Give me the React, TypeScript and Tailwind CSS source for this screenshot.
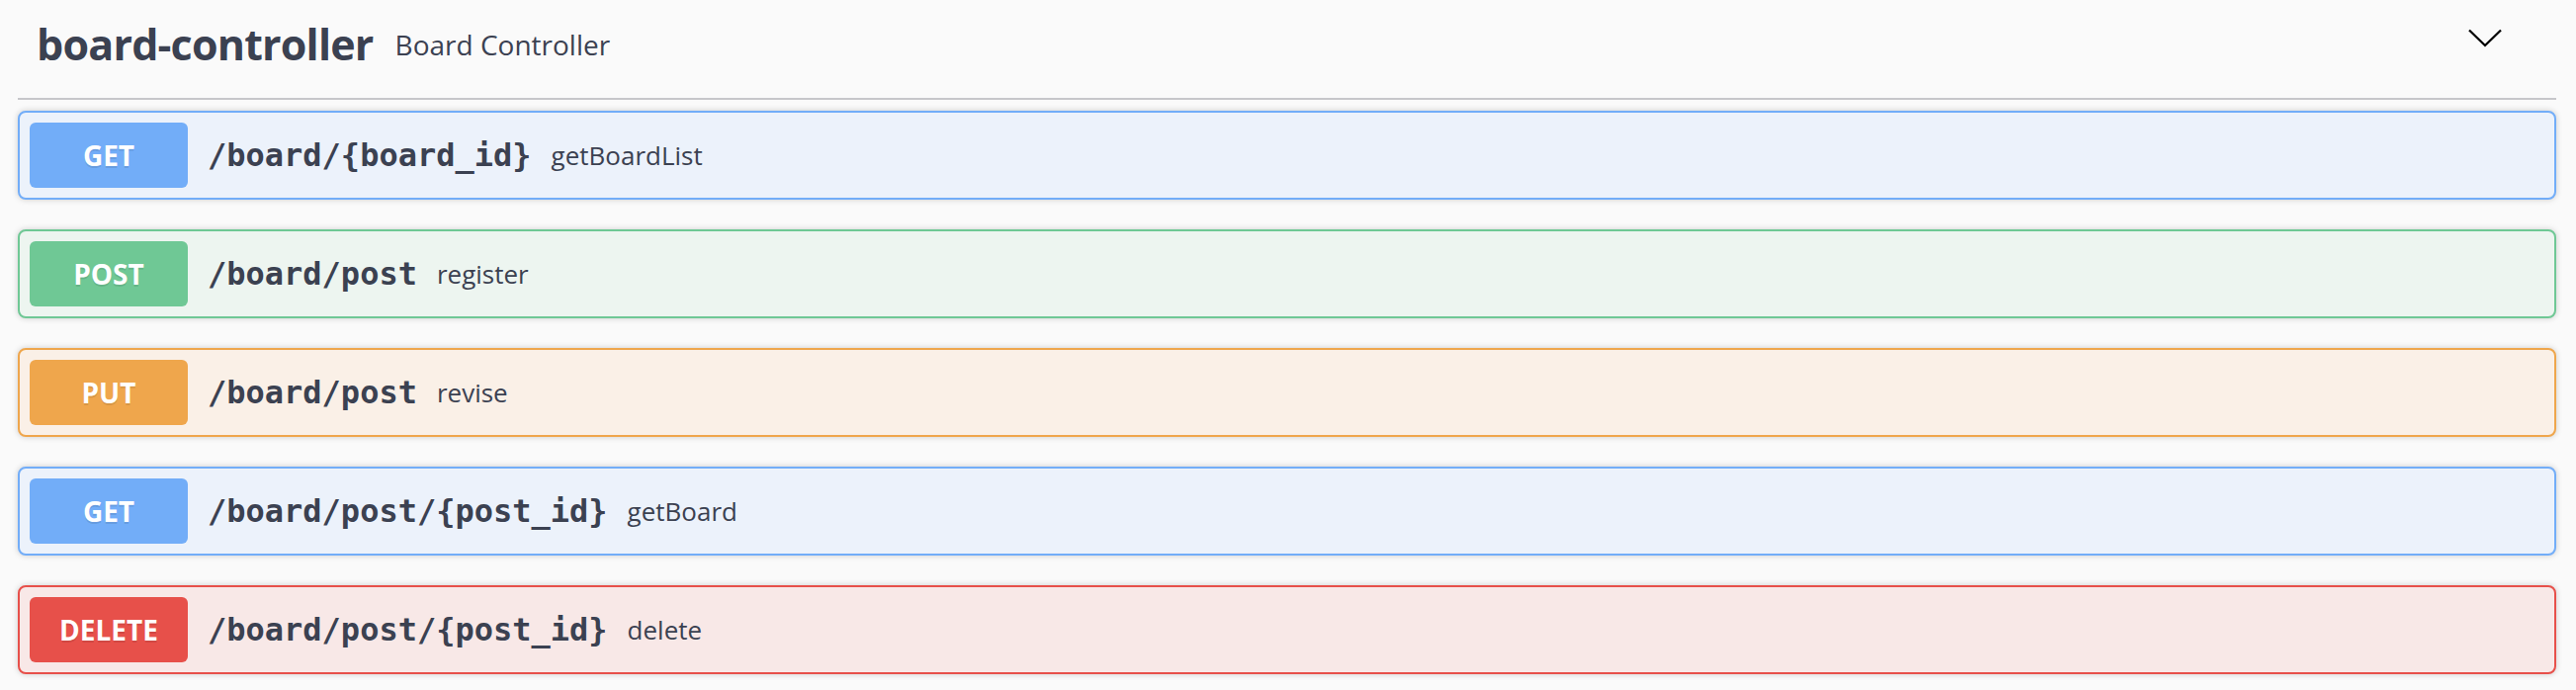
type Method = "GET" | "POST" | "PUT" | "DELETE";

interface Operation {
  method: Method;
  path: string;
  summary: string;
}

const operations: Operation[] = [
  { method: "GET", path: "/board/{board_id}", summary: "getBoardList" },
  { method: "POST", path: "/board/post", summary: "register" },
  { method: "PUT", path: "/board/post", summary: "revise" },
  { method: "GET", path: "/board/post/{post_id}", summary: "getBoard" },
  { method: "DELETE", path: "/board/post/{post_id}", summary: "delete" },
];

const rowStyles: Record<Method, { row: string; badge: string }> = {
  GET: { row: "border-[#72adf8] bg-[#ecf2fb]", badge: "bg-[#72adf8]" },
  POST: { row: "border-[#6fc895] bg-[#edf5f0]", badge: "bg-[#6fc895]" },
  PUT: { row: "border-[#efa64c] bg-[#faf0e7]", badge: "bg-[#efa64c]" },
  DELETE: { row: "border-[#e7504a] bg-[#f8e8e7]", badge: "bg-[#e7504a]" },
};

function OperationRow({ op }: { op: Operation }) {
  const style = rowStyles[op.method];
  return (
    <div
      className={`flex items-center rounded-[8px] border-2 p-[10px] shadow-[0_0_6px_rgba(0,0,0,0.19)] ${style.row}`}
    >
      <span
        className={`flex h-[66px] w-[160px] shrink-0 items-center justify-center rounded-[6px] text-[28px] font-bold text-white [text-shadow:0_2px_0_rgba(0,0,0,0.1)] ${style.badge}`}
      >
        {op.method}
      </span>
      <span className="px-[20px] font-['DejaVu_Sans_Mono',monospace] text-[32px] font-bold">
        {op.path}
      </span>
      <span className="text-[26px]">{op.summary}</span>
    </div>
  );
}

export default function App() {
  return (
    <div className="min-h-screen bg-[#fafafa] pl-[18px] pr-[20px] font-['Open_Sans',sans-serif] text-[#3b4151]">
      {/* Tag header */}
      <div className="flex h-[101px] items-start border-b-2 border-[#c6c6ca] pl-[19px] pt-[16px]">
        <h3 className="text-[43px] font-bold leading-[58px] tracking-[-0.8px]">board-controller</h3>
        <small className="ml-[22px] mt-[10px] text-[28px] leading-[38px]">Board Controller</small>
        <button className="ml-auto mr-[55px] mt-[13px]" aria-label="Collapse">
          <svg width="34" height="19" viewBox="0 0 34 19" fill="none">
            <polyline points="1,1.5 17,17 33,1.5" stroke="#000" strokeWidth="2.3" />
          </svg>
        </button>
      </div>

      {/* Operations */}
      <div className="mt-[11px] flex flex-col gap-[30px]">
        {operations.map((op, i) => (
          <OperationRow key={i} op={op} />
        ))}
      </div>
    </div>
  );
}
